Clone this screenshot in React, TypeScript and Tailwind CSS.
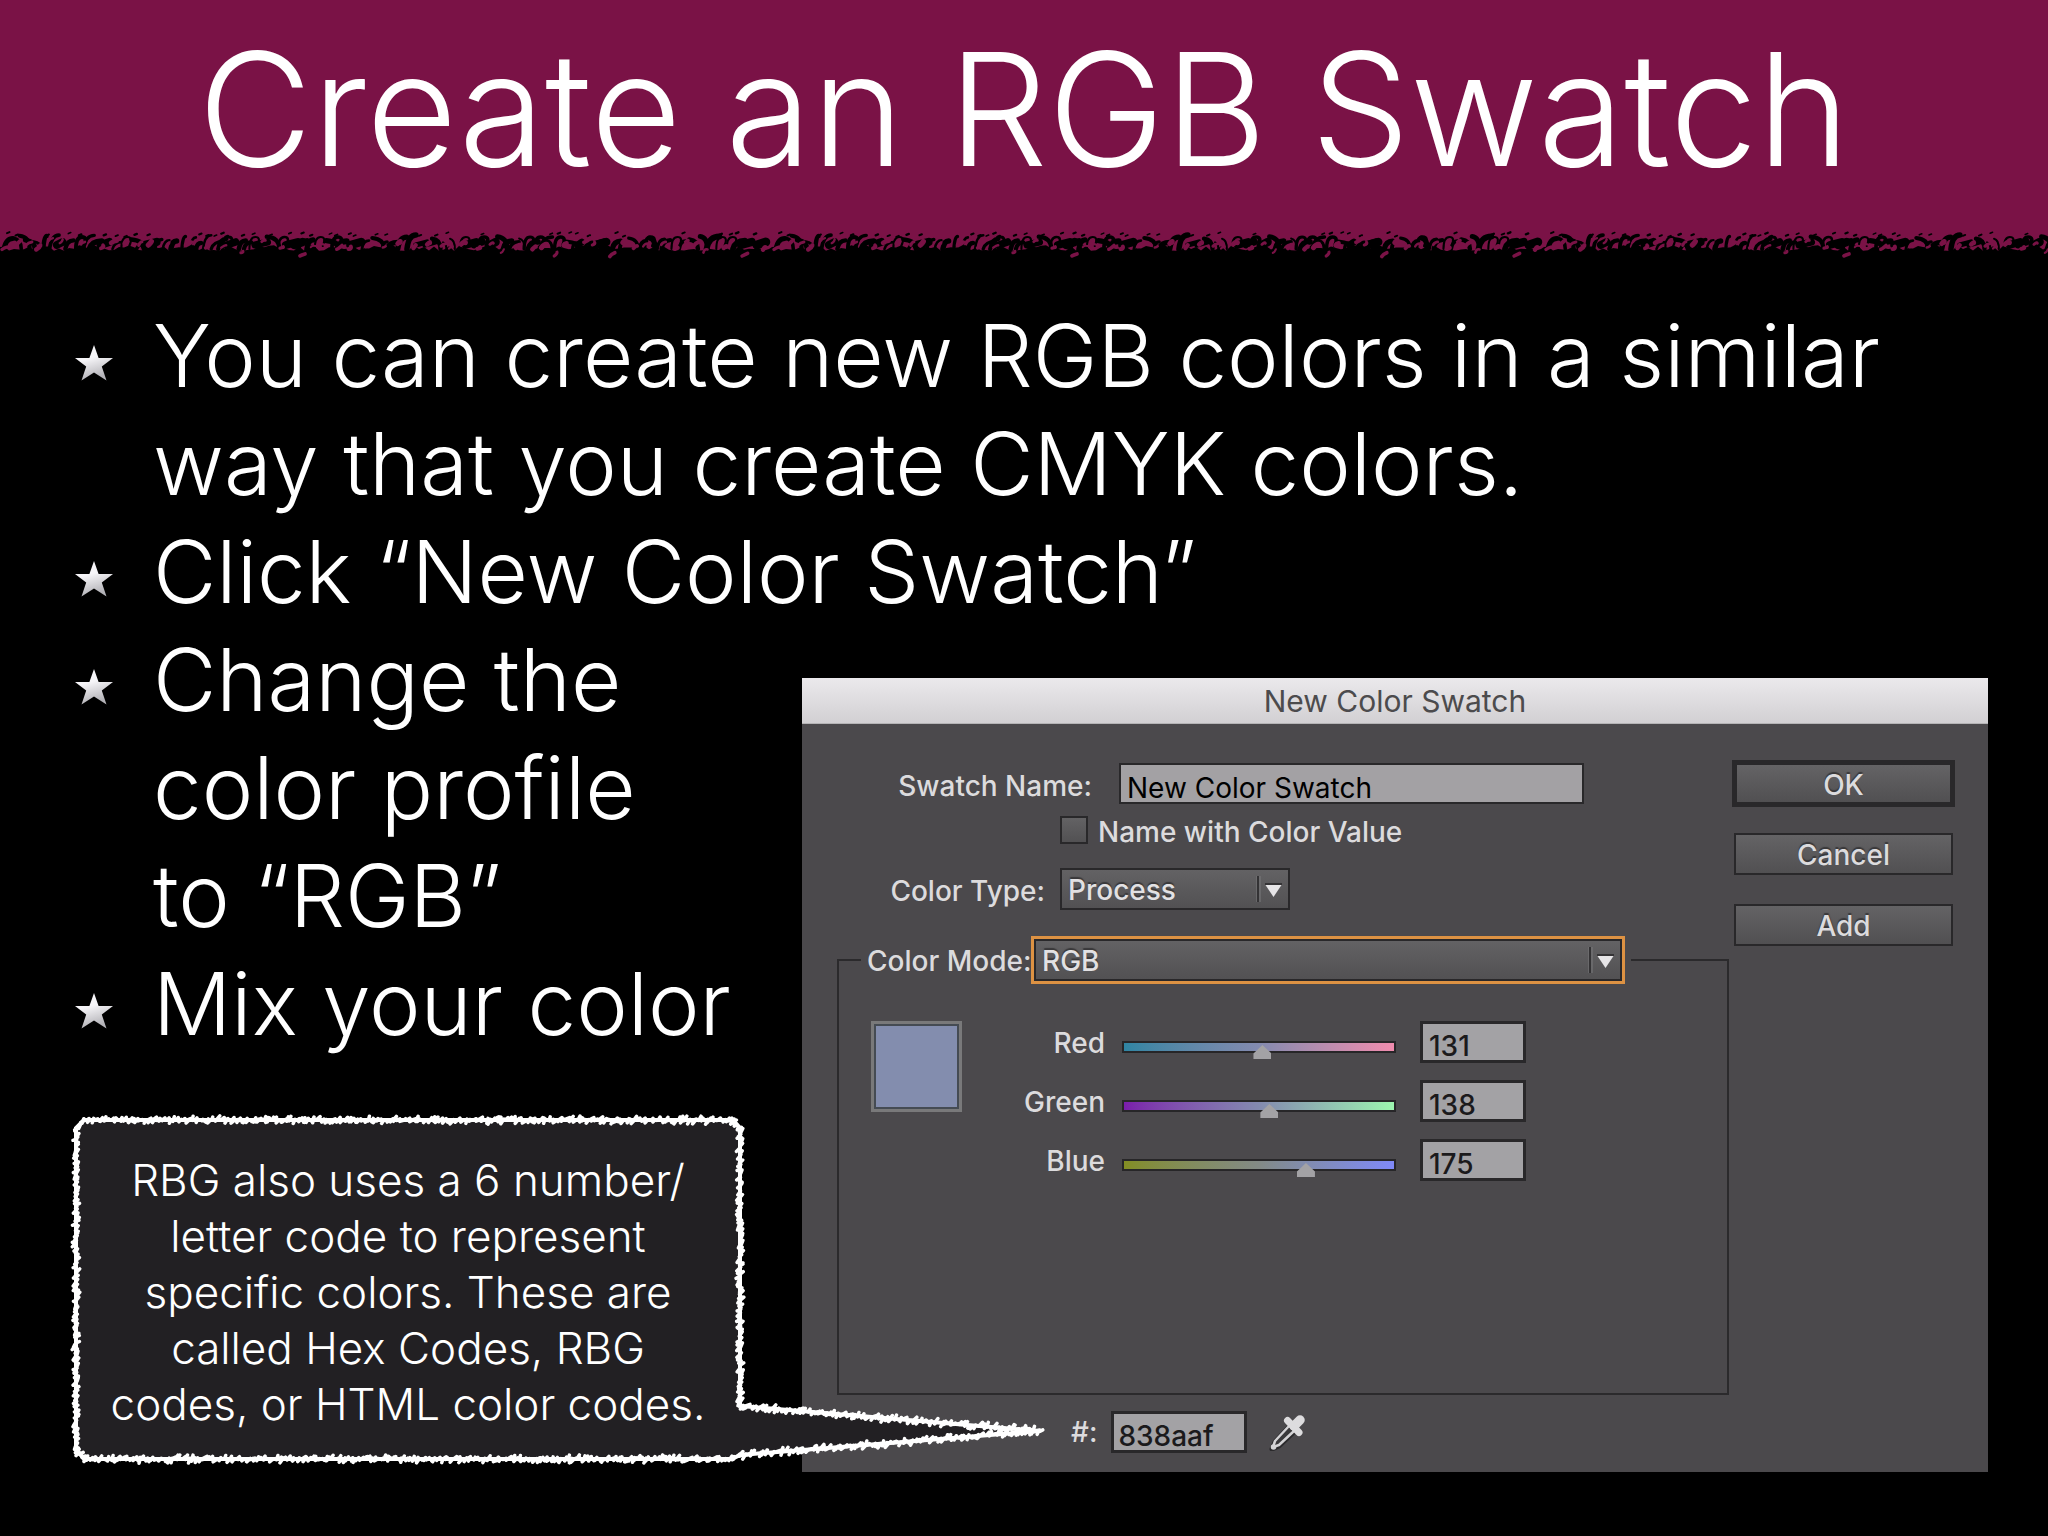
import React, { useState } from "react";

/** Small deterministic generator, so the brush texture is the same on every render. */
function makeRandom(seed: number) {
  let s = seed;
  return () => {
    s = (s * 1664525 + 1013904223) % 4294967296;
    return s / 4294967296;
  };
}

const TILE = 772;

type Mark = { d: string; w: number };

function buildEdge() {
  const rnd = makeRandom(29);
  const n = (v: number) => v.toFixed(1);
  const dark: Mark[] = [];
  const light: Mark[] = [];
  /* Uneven upper limit of the solid black area. */
  let ground = "M0 30V17";
  for (let x = 4; x < TILE; x += 5) {
    ground += `L${x} ${n(15 + rnd() * 6)}`;
  }
  ground += `L${TILE} 17V30Z`;
  /* Curled brush strokes that rise out of the black area. */
  let x = 4;
  while (x < TILE - 14) {
    const kind = rnd();
    const h = 6 + rnd() * 8;
    const w = 3 + rnd() * 10;
    const base = 19;
    if (kind < 0.45) {
      dark.push({ d: `M${n(x)} ${base}Q${n(x + w * 0.2)} ${n(base - h)} ${n(x + w)} ${n(base - h)}`, w: 2.5 + rnd() * 3.5 });
    } else if (kind < 0.7) {
      dark.push({ d: `M${n(x)} ${n(base - h)}Q${n(x + w)} ${n(base - h + 1)} ${n(x + w)} ${base}`, w: 2 + rnd() * 3.5 });
    } else if (kind < 0.85) {
      dark.push({ d: `M${n(x)} ${base}q0 -12 6 -12t2 9`, w: 2 + rnd() * 2 });
    } else {
      dark.push({ d: `M${n(x)} ${n(base - 4)}l${n(w)} -3`, w: 5 + rnd() * 4 });
    }
    if (rnd() > 0.6) {
      dark.push({ d: `M${n(x + 3)} ${n(3 + rnd() * 4)}l2.500 -1`, w: 1.5 + rnd() });
    }
    x += 4 + rnd() * 8;
  }
  /* Drips and specks of header color inside the black area. */
  x = 2;
  while (x < TILE - 8) {
    const deep = rnd() > 0.8;
    const y = deep ? 22 + rnd() * 5 : 11 + rnd() * 9;
    light.push({
      d: `M${n(x)} ${n(y)}q${n(1 + rnd() * 3)} ${n(-rnd() * 4)} ${n(2 + rnd() * 4)} ${n(-1 - rnd() * 3)}`,
      w: deep ? 2 + rnd() * 2 : 2 + rnd() * 3.5,
    });
    x += 8 + rnd() * 13;
  }
  return { ground, dark, light };
}

const EDGE = buildEdge();

function RoughEdge() {
  return (
    <svg className="block h-[30px] w-full" aria-hidden="true">
      <defs>
        <pattern id="edge" width={TILE} height="30" patternUnits="userSpaceOnUse">
          <rect width={TILE} height="30" fill="#7a1246" />
          <path d={EDGE.ground} fill="#000" />
          {EDGE.dark.map((s, i) => (
            <path key={i} d={s.d} stroke="#000" strokeWidth={s.w} strokeLinecap="round" fill="none" />
          ))}
          {EDGE.light.map((s, i) => (
            <path key={i} d={s.d} stroke="#7a1246" strokeWidth={s.w} strokeLinecap="round" fill="none" />
          ))}
        </pattern>
      </defs>
      <rect width="100%" height="30" fill="url(#edge)" />
    </svg>
  );
}

function Star() {
  return (
    <svg viewBox="0 0 38 36" className="h-9 w-[38px]" aria-hidden="true">
      <defs>
        <linearGradient id="star" x1="0" y1="0" x2="0.3" y2="1">
          <stop offset="0.45" stopColor="#f6f5f8" />
          <stop offset="1" stopColor="#b4b3b8" />
        </linearGradient>
      </defs>
      <path d="M19 0 L23.6 13 L38 13 L26.8 21.6 L31.5 35.5 L19 27.4 L6.5 35.5 L11.2 21.6 L0 13 L14.4 13 Z" fill="url(#star)" />
    </svg>
  );
}

function Bullet({ children }: { children: React.ReactNode }) {
  return (
    <li className="flex">
      <span className="flex h-[108px] w-[78px] shrink-0 items-center pt-3.5">
        <Star />
      </span>
      <span>{children}</span>
    </li>
  );
}

/* Callout outline: a box with a long tail that ends at the hex field. */
const OUTLINE: [number, number][] = [
  [14, 8], [663, 8], [670, 16], [670, 294], [970, 319], [670, 343], [662, 347], [14, 347], [6, 337], [6, 16], [14, 8],
];

function buildDabs() {
  const rnd = makeRandom(5);
  let d = "";
  for (let i = 0; i < OUTLINE.length - 1; i++) {
    const [x1, y1] = OUTLINE[i];
    const [x2, y2] = OUTLINE[i + 1];
    const len = Math.hypot(x2 - x1, y2 - y1);
    for (let t = 0; t < len; t += 3) {
      const x = x1 + ((x2 - x1) * t) / len + (rnd() - 0.5) * 4;
      const y = y1 + ((y2 - y1) * t) / len + (rnd() - 0.5) * 4;
      const dx = 0.5 + rnd() * 1.5;
      const dy = -0.5 - rnd() * 2;
      d += `M${(x - dx).toFixed(1)} ${(y - dy).toFixed(1)}L${(x + dx).toFixed(1)} ${(y + dy).toFixed(1)}`;
    }
  }
  return d;
}

const DABS = buildDabs();
const OUTLINE_PATH = "M" + OUTLINE.map((p) => p.join(" ")).join("L") + "Z";

function Callout() {
  return (
    <div className="relative z-10 mt-[54px] ml-[70px] w-[676px] pt-10 pb-9">
      <svg viewBox="0 0 980 356" className="absolute top-0 left-0 h-[356px] w-[980px] max-w-none" aria-hidden="true">
        <path d={OUTLINE_PATH} fill="#222023" stroke="#fff" strokeWidth="4" />
        <path d={DABS} stroke="#fff" strokeWidth="3.500" strokeLinecap="round" fill="none" />
      </svg>
      <p className="relative text-center text-[44px] leading-[56px]">
        RBG also uses a 6 number/
        <br />
        letter code to represent
        <br />
        specific colors. These are
        <br />
        called Hex Codes, RBG
        <br />
        codes, or HTML color codes.
      </p>
    </div>
  );
}

function Dropdown({ id, value, boxClass }: { id: string; value: string; boxClass: string }) {
  return (
    <span className={"relative block " + boxClass}>
      <select
        id={id}
        defaultValue={value}
        className="block h-full w-full appearance-none border-2 border-[#29282a] bg-linear-to-b from-[#636264] to-[#525153] pt-0.5 pr-12 pl-1.5 text-[#e2e1e3] outline-none text-shadow-[0_-2px_1px_#39383a]"
      >
        <option>{value}</option>
      </select>
      <svg viewBox="0 0 30 28" className="pointer-events-none absolute top-1/2 right-1 h-7 w-[30px] -translate-y-1/2" aria-hidden="true">
        <path d="M2 1V27" stroke="#343335" strokeWidth="2" />
        <path d="M4 1V27M0 1V27" stroke="#7b7a7c" strokeWidth="1" />
        <path d="M9 9H26" stroke="#343335" strokeWidth="2" />
        <path d="M9.500 10H25.500L17.500 22Z" fill="#e6e5e7" />
      </svg>
    </span>
  );
}

const CHANNELS = [
  { name: "Red", value: 131, track: "from-[#2f85a3] via-[#838aaf] to-[#f08cae]" },
  { name: "Green", value: 138, track: "from-[#7a1cab] via-[#838aaf] to-[#9cf5ae]" },
  { name: "Blue", value: 175, track: "from-[#838d22] via-[#838a86] to-[#8089f8]" },
];

function Channel({ name, start, track }: { name: string; start: number; track: string }) {
  const [value, setValue] = useState(start);
  const id = "channel-" + name;
  return (
    <div className="flex h-[42px] items-center">
      <label htmlFor={id} className="w-[110px] pt-0.5 text-right">
        {name}
      </label>
      <input
        id={id}
        type="range"
        min={0}
        max={255}
        value={value}
        onChange={(e) => setValue(Number(e.target.value))}
        className={
          "mt-2.5 ml-[17px] block h-3 w-[274px] appearance-none border-2 border-[#272628] bg-linear-to-r [&::-webkit-slider-thumb]:mt-2.5 [&::-webkit-slider-thumb]:h-3.5 [&::-webkit-slider-thumb]:w-[18px] [&::-webkit-slider-thumb]:appearance-none [&::-webkit-slider-thumb]:bg-[#a3a2a5] [&::-webkit-slider-thumb]:[clip-path:polygon(50%_0,100%_60%,100%_100%,0_100%,0_60%)] " +
          track
        }
      />
      <input
        aria-label={name + " value"}
        type="text"
        value={value}
        onChange={(e) => setValue(Number(e.target.value) || 0)}
        className="ml-6 h-[42px] w-[106px] border-[3px] border-[#29282a] bg-[#a3a2a5] px-1.5 pt-2 text-[#1b1a1c] outline-none"
      />
    </div>
  );
}

function Eyedropper() {
  return (
    <svg viewBox="0 0 38 38" className="h-[38px] w-[38px]" aria-hidden="true">
      <path d="M22 12 L6 29 L3 36 L10 33 L27 17" fill="#333234" stroke="#2b2a2c" strokeWidth="5" strokeLinejoin="round" />
      <path d="M20 13 L6 28 L4 34 L10 32 L25 18" fill="#3a393b" stroke="#d3d2d4" strokeWidth="2.500" strokeLinejoin="round" />
      <circle cx="4.500" cy="34" r="2.800" fill="#d3d2d4" />
      <path d="M31 7 L25 13" stroke="#dddcde" strokeWidth="9.500" strokeLinecap="round" />
      <path d="M18.500 7.500 L30 19.500" stroke="#dddcde" strokeWidth="7" strokeLinecap="round" />
    </svg>
  );
}

const BUTTON =
  "mx-0.5 h-[42px] border-2 border-[#29282a] bg-linear-to-b from-[#646365] to-[#515052] pt-0.5 text-shadow-[0_-2px_1px_#39383a]";

function SwatchDialog() {
  return (
    <section
      aria-label="New Color Swatch"
      className="mt-[52px] mr-15 flex-1 bg-[#4b494c] font-['Inter',sans-serif] text-[28px] leading-9 font-medium text-[#dcdbdd]"
    >
      <h2 className="flex h-[46px] items-center justify-center border-b border-[#b5b4b6] bg-linear-to-b from-[#ebe9ec] to-[#d2d0d3] text-[30px] font-normal text-[#4c4b4d]">
        New Color Swatch
      </h2>
      <div className="flex items-start pr-[33px] pb-[19px] pl-[35px]">
        <form className="flex-1 pt-[39px]" onSubmit={(e) => e.preventDefault()}>
          <div className="flex items-center">
            <label htmlFor="swatch-name" className="w-[255px] pt-1 text-right">
              Swatch Name:
            </label>
            <input
              id="swatch-name"
              type="text"
              defaultValue="New Color Swatch"
              className="mr-[145px] ml-[27px] h-[41px] min-w-0 flex-1 border-2 border-[#29282a] bg-[#a3a1a4] px-1.5 pt-2 font-normal text-black outline-none"
            />
          </div>
          <div className="mt-2 flex items-center pl-[223px]">
            <input
              id="name-value"
              type="checkbox"
              className="block h-7 w-7 appearance-none border-2 border-[#29282a] bg-linear-to-b from-[#636264] to-[#525153]"
            />
            <label htmlFor="name-value" className="ml-2.5 h-9 pt-1 leading-8">
              Name with Color Value
            </label>
          </div>
          <div className="mt-5 flex items-center">
            <label htmlFor="color-type" className="w-[208px] pt-1 text-right">
              Color Type:
            </label>
            <Dropdown id="color-type" value="Process" boxClass="ml-[15px] h-[42px] w-[230px]" />
          </div>
          <fieldset className="mt-[26px] h-[459px] border-2 border-[#2b2a2c]">
            <legend className="ml-[22px] flex w-[calc(100%-118px)] items-center px-1.5">
              <label htmlFor="color-mode" className="w-[164px] shrink-0 pt-0.5 whitespace-nowrap">
                Color Mode:
              </label>
              <Dropdown id="color-mode" value="RGB" boxClass="h-12 flex-1 border-[3px] border-[#dd9243]" />
            </legend>
            <div className="flex pt-[37px] pl-8">
              <div className="h-[91px] w-[91px] border-[3px] border-[#79797a] bg-[#838dae] inset-ring-2 inset-ring-[#454b53]" />
              <div className="flex flex-col gap-[17px] pl-[33px]">
                {CHANNELS.map((c) => (
                  <Channel key={c.name} name={c.name} start={c.value} track={c.track} />
                ))}
              </div>
            </div>
          </fieldset>
          <div className="mt-4 flex items-center pl-[234px]">
            <label htmlFor="hex">#:</label>
            <input
              id="hex"
              type="text"
              defaultValue="838aaf"
              className="ml-3.5 h-[42px] w-[136px] border-[3px] border-[#29282a] bg-[#a3a2a5] px-1 pt-2 text-[#1b1a1c] outline-none"
            />
            <button type="button" aria-label="Pick a color" className="ml-[22px]">
              <Eyedropper />
            </button>
          </div>
        </form>
        <div className="ml-[3px] flex w-[223px] flex-col pt-9">
          <button type="button" className="h-[47px] border-[5px] border-[#29282a] bg-linear-to-b from-[#646365] to-[#515052] pt-0.5 leading-8 text-shadow-[0_-2px_1px_#39383a]">
            OK
          </button>
          <button type="button" className={BUTTON + " mt-[26px]"}>
            Cancel
          </button>
          <button type="button" className={BUTTON + " mt-[29px]"}>
            Add
          </button>
        </div>
      </div>
    </section>
  );
}

export default function App() {
  return (
    <main className="min-h-screen overflow-hidden bg-black font-['Inter',sans-serif] font-light text-white">
      <header>
        <h1 className="flex h-[230px] items-center justify-center bg-[#7a1246] pb-3 text-[157px] leading-none font-light">
          Create an RGB Swatch
        </h1>
        <RoughEdge />
      </header>
      <ul className="pt-[42px] pr-15 pl-[75px] text-[87px] leading-[108px]">
        <Bullet>
          You can create new RGB colors in a similar
          <br />
          way that you create CMYK colors.
        </Bullet>
        <Bullet>Click “New Color Swatch”</Bullet>
      </ul>
      <div className="flex items-start">
        <div className="w-[802px] shrink-0">
          <ul className="pl-[75px] text-[87px] leading-[108px]">
            <Bullet>
              Change the
              <br />
              color profile
              <br />
              to “RGB”
            </Bullet>
            <Bullet>Mix your color</Bullet>
          </ul>
          <Callout />
        </div>
        <SwatchDialog />
      </div>
    </main>
  );
}
